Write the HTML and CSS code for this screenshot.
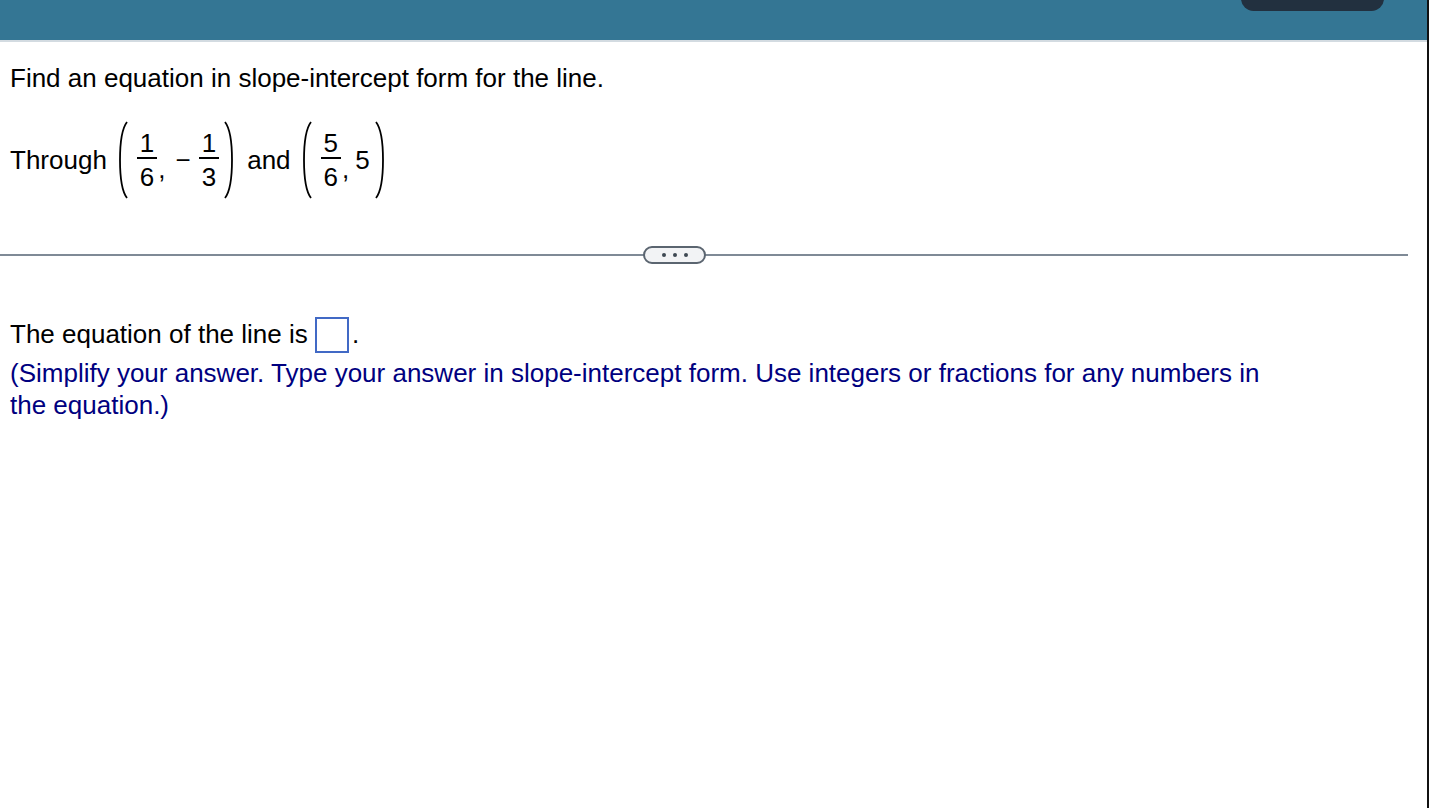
FILE: index.html
```html
<!DOCTYPE html>
<html>
<head>
<meta charset="utf-8">
<link rel="stylesheet" href="styles.css">
</head>
<body>
<div class="frame">
  <header class="topbar">
    <div class="topbar-pill"></div>
  </header>
  <main class="content">
    <p class="prompt">Find an equation in slope-intercept form for the line.</p>
    <div class="through">
      <span class="word">Through</span>
      <svg class="paren" viewBox="0 0 10 78" width="10" height="78"><path d="M8 1 Q1 10 1 39 Q1 68 8 77" fill="none" stroke="#000" stroke-width="1.8"/></svg>
      <span class="frac"><span class="num">1</span><span class="den">6</span></span>
      <span class="comma">,</span>
      <span class="minus">&minus;</span>
      <span class="frac"><span class="num">1</span><span class="den">3</span></span>
      <svg class="paren" viewBox="0 0 10 78" width="10" height="78"><path d="M2 1 Q9 10 9 39 Q9 68 2 77" fill="none" stroke="#000" stroke-width="1.8"/></svg>
      <span class="word and">and</span>
      <svg class="paren" viewBox="0 0 10 78" width="10" height="78"><path d="M8 1 Q1 10 1 39 Q1 68 8 77" fill="none" stroke="#000" stroke-width="1.8"/></svg>
      <span class="frac"><span class="num">5</span><span class="den">6</span></span>
      <span class="comma comma-last">,</span>
      <span class="plain">5</span>
      <svg class="paren" viewBox="0 0 10 78" width="10" height="78"><path d="M2 1 Q9 10 9 39 Q9 68 2 77" fill="none" stroke="#000" stroke-width="1.8"/></svg>
    </div>
    <div class="divider">
      <button class="more"><span></span><span></span><span></span></button>
    </div>
    <div class="answer">
      <p class="answer-line">The equation of the line is <span class="box"></span>.</p>
      <p class="hint">(Simplify your answer. Type your answer in slope-intercept form. Use integers or fractions for any numbers in the equation.)</p>
    </div>
  </main>
</div>
</body>
</html>
```
FILE: styles.css
```css
html, body {
  margin: 0;
  padding: 0;
  background: #ffffff;
}
body {
  font-family: "Liberation Sans", Arial, sans-serif;
  color: #000;
}
.frame {
  width: 1427px;
  height: 808px;
  border-right: 2px solid #111;
  box-sizing: content-box;
  overflow: hidden;
}
.topbar {
  height: 40px;
  background: #347694;
  border-bottom: 2px solid #d3dbe1;
  position: relative;
}
.topbar-pill {
  position: absolute;
  left: 1241px;
  top: -14px;
  width: 143px;
  height: 25px;
  background: #22303f;
  border-radius: 14px;
}
.content {
  padding: 0 0 0 10px;
}
.prompt {
  margin: 0;
  padding-top: 20px;
  font-size: 26px;
  line-height: 32px;
}
.through {
  display: flex;
  align-items: center;
  margin-top: 27px;
  font-size: 26px;
  height: 78px;
}
.word { margin-right: 12px; }
.and { margin-left: 14px; margin-right: 12px; }
.paren {
  display: block;
  flex: none;
}
.frac {
  display: inline-flex;
  flex-direction: column;
  align-items: center;
  line-height: 24px;
  margin: 0 4px 0 8px;
}
.frac .num {
  border-bottom: 2px solid #000;
  padding: 0 3px 2px;
}
.frac .den {
  padding-top: 6px;
}
.comma { margin-top: 18px; margin-right: 10px; margin-left: -3px; }
.comma-last { margin-right: 6px; }
.minus { margin-right: 0; }
.plain { margin-right: 4px; }
.divider {
  margin-top: 47px;
  margin-left: -10px;
  width: 1408px;
  height: 18px;
  display: flex;
  align-items: center;
  position: relative;
}
.divider::before {
  content: "";
  position: absolute;
  left: 0;
  right: 0;
  top: 8px;
  height: 2px;
  background: #7f8a96;
}
.more {
  position: relative;
  margin-left: 643px;
  width: 63px;
  height: 18px;
  border: 2px solid #5b6570;
  border-radius: 9px;
  background: #f2f3f5;
  display: flex;
  align-items: center;
  justify-content: center;
  gap: 7px;
  padding: 0;
}
.more span {
  width: 4px;
  height: 4px;
  border-radius: 50%;
  background: #3e4852;
}
.answer {
  margin-top: 52px;
}
.answer-line {
  margin: 0;
  font-size: 26px;
  line-height: 37px;
  display: flex;
  align-items: center;
  white-space: pre;
}
.box {
  display: inline-block;
  box-sizing: border-box;
  width: 34px;
  height: 36px;
  border: 2px solid #4169c5;
  margin-left: 0px;
  margin-right: 3px;
}
.hint {
  margin: 4px 0 0;
  font-size: 26px;
  line-height: 32px;
  color: #000080;
  width: 1280px;
}
```
